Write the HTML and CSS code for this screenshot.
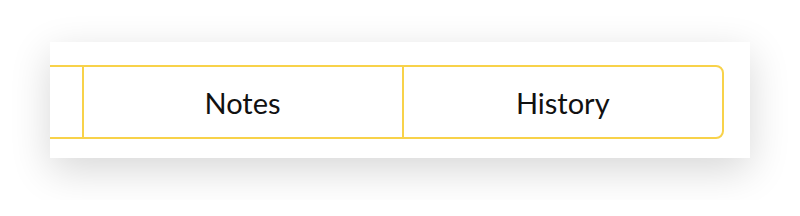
FILE: index.html
```html
<!DOCTYPE html>
<html lang="en">
<head>
<meta charset="UTF-8" />
<meta name="viewport" content="width=device-width, initial-scale=1" />
<title>Tabs</title>
<link rel="stylesheet" href="styles.css">
</head>
<body>

<div class="card">
  <div class="tabs">
    <div class="tab"></div>
    <div class="tab">Notes</div>
    <div class="tab last">History</div>
  </div>
</div>

</body>
</html>
```

FILE: styles.css
```css
body {
  margin: 0;
  padding: 42px 50px;
  background: #fff;
  font-family: Lato, "Noto Sans", sans-serif;
}

/* --- Card with shadow, tabs overflow to the left --- */
.card {
  width: 700px;
  height: 116px;
  box-sizing: border-box;
  padding: 23px 26px 19px 0;
  background: #fff;
  box-shadow: 0 12px 40px rgba(0, 0, 0, 0.16);
  display: flex;
  justify-content: flex-end;
  overflow: hidden;
}

.tabs {
  display: flex;
  flex-shrink: 0;
  height: 74px;
  box-sizing: border-box;
  border: 2px solid #f8d24a;
  border-radius: 8px;
}
.tab {
  width: 318px;
  display: flex;
  align-items: center;
  justify-content: center;
  font-size: 29px;
  color: #111;
  border-right: 2px solid #f8d24a;
}
.tab.last {
  width: 318.5px;
  border-right: none;
}
```
